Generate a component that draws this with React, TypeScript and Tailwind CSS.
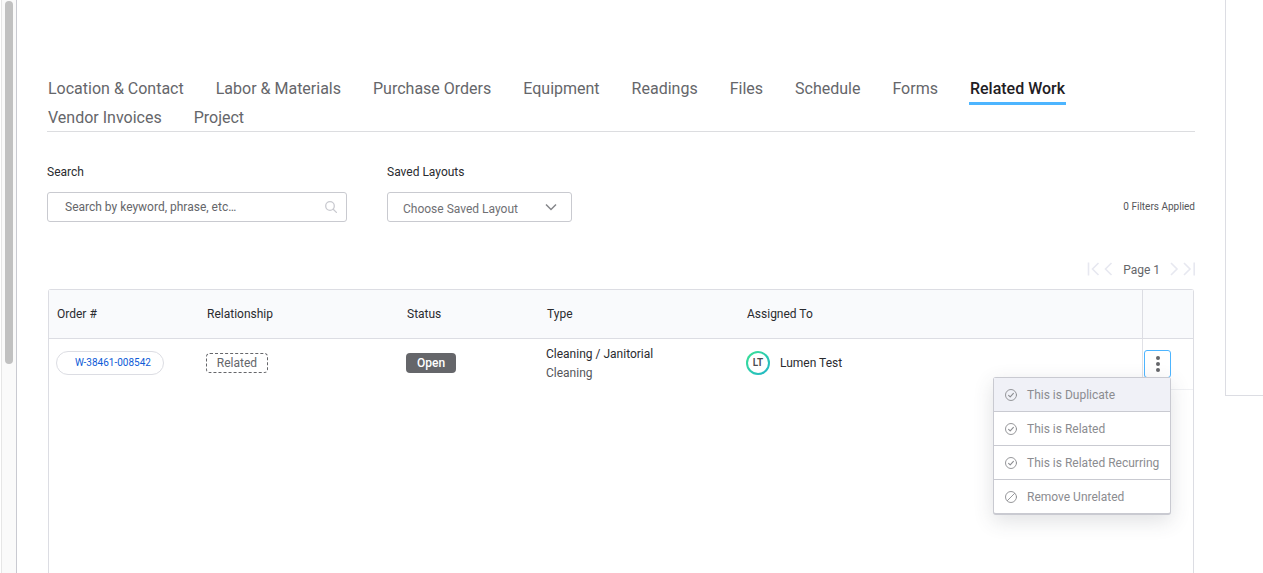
import { useState } from 'react';

const tabs = [
  'Location & Contact',
  'Labor & Materials',
  'Purchase Orders',
  'Equipment',
  'Readings',
  'Files',
  'Schedule',
  'Forms',
  'Related Work',
  'Vendor Invoices',
  'Project',
];

const actions = [
  { label: 'This is Duplicate', icon: 'check' },
  { label: 'This is Related', icon: 'check' },
  { label: 'This is Related Recurring', icon: 'check' },
  { label: 'Remove Unrelated', icon: 'ban' },
];

const ActionIcon = ({ icon }: { icon: string }) => (
  <svg className="h-3 w-3 shrink-0" viewBox="0 0 12 12" fill="none" stroke="currentColor" strokeLinecap="round" strokeLinejoin="round">
    <circle cx="6" cy="6" r="5.5" strokeWidth="0.9" />
    {icon === 'check' ? <path d="M3.6 6.3l1.6 1.5 3.2-3.5" strokeWidth="1.1" /> : <path d="M2.4 9.6l7.2-7.2" strokeWidth="0.9" />}
  </svg>
);

const Pager = () => (
  <nav aria-label="Pagination" className="mt-[39px] mb-[11px] flex h-[17px] items-start justify-end text-xs text-[#65666a]">
    <button aria-label="First page" className="text-[#e7e8f0]">
      <svg className="h-4 w-4" viewBox="0 0 16 16" fill="none" stroke="currentColor" strokeWidth="1.6">
        <path d="M2.5 1.5v13M12.5 2l-6 6 6 6" />
      </svg>
    </button>
    <button aria-label="Previous page" className="text-[#e7e8f0]">
      <svg className="h-4 w-3" viewBox="0 0 12 16" fill="none" stroke="currentColor" strokeWidth="1.6">
        <path d="M9.5 2l-6 6 6 6" />
      </svg>
    </button>
    <span className="self-end pr-[7px] pl-[9px] leading-4">Page 1</span>
    <button aria-label="Next page" className="text-[#e7e8f0]">
      <svg className="h-4 w-3" viewBox="0 0 12 16" fill="none" stroke="currentColor" strokeWidth="1.6">
        <path d="M4 2l6 6-6 6" />
      </svg>
    </button>
    <button aria-label="Last page" className="text-[#e7e8f0]">
      <svg className="h-4 w-4" viewBox="0 0 16 16" fill="none" stroke="currentColor" strokeWidth="1.6">
        <path d="M15.2 1.5v13M5 2l6 6-6 6" />
      </svg>
    </button>
  </nav>
);

const RowMenu = () => {
  const [open, setOpen] = useState(true);

  return (
    <div className="relative w-[27px]">
      <button
        aria-label="Row actions"
        aria-expanded={open}
        onClick={() => setOpen(!open)}
        className="flex h-7 w-[27px] items-center justify-center rounded-[3px] border border-[#4db5ff] bg-white pb-px text-[#65666a]"
      >
        <svg className="h-4 w-1" viewBox="0 0 4 16" fill="currentColor">
          <circle cx="2" cy="2" r="2" />
          <circle cx="2" cy="8" r="2" />
          <circle cx="2" cy="14" r="2" />
        </svg>
      </button>
      {open && (
        <ul
          role="menu"
          className="absolute top-[27px] right-0 z-10 w-[178px] rounded-[3px] border border-b-2 border-[#c9cad1] bg-white shadow-[0_6px_20px_rgba(60,70,80,0.16)]"
        >
          {actions.map((action, index) => (
            <li key={action.label} role="none" className={index > 0 ? 'border-t border-[#c9cad1]' : 'bg-[#f0f1f7]'}>
              <button
                role="menuitem"
                className="flex h-[33px] w-full items-center gap-[10px] pl-[11px] text-xs whitespace-nowrap text-[#8b8c90]"
              >
                <ActionIcon icon={action.icon} />
                {action.label}
              </button>
            </li>
          ))}
        </ul>
      )}
    </div>
  );
};

const OrdersTable = () => (
  <div className="mx-px flex-1 rounded-t-[3px] border border-b-0 border-[#dcdde3]">
    <table className="w-full table-fixed border-separate border-spacing-0 text-left text-xs text-[#2a2b2f]">
      <colgroup>
        <col className="w-[150px]" />
        <col className="w-[200px]" />
        <col className="w-[140px]" />
        <col className="w-[200px]" />
        <col />
        <col className="w-[51px]" />
      </colgroup>
      <thead>
        <tr className="h-[49px] bg-[#f9fafc]">
          {['Order #', 'Relationship', 'Status', 'Type', 'Assigned To'].map((name) => (
            <th key={name} className="border-b border-[#dcdde3] px-2 font-normal">
              {name}
            </th>
          ))}
          <th aria-label="Actions" className="border-b border-l border-[#dcdde3]" />
        </tr>
      </thead>
      <tbody>
        <tr className="h-[51px]">
          <td className="px-[7px] pb-[3px]">
            <a
              href="#order"
              className="flex h-6 w-[108px] items-center rounded-full border border-[#dcdde3] pl-[18px] text-[10px] text-[#0d5bd7]"
            >
              W-38461-008542
            </a>
          </td>
          <td className="px-[7px] pb-[3px]">
            <span className="flex h-5 w-[62px] items-center justify-center rounded-[4px] border border-dashed border-[#65666a] text-[#65666a]">
              Related
            </span>
          </td>
          <td className="px-[7px] pb-[3px]">
            <span className="flex h-5 w-[50px] items-center justify-center rounded-[4px] bg-[#65666a] font-medium text-white">Open</span>
          </td>
          <td className="px-[7px] pb-[2px] leading-[19px]">
            <p>Cleaning / Janitorial</p>
            <p className="text-[#55565a]">Cleaning</p>
          </td>
          <td className="px-[7px] pb-[3px]">
            <div className="flex items-center gap-[10px]">
              <span className="flex h-6 w-6 rounded-full bg-linear-to-br from-[#3de38f] to-[#22b3c9] p-[2px]">
                <span className="flex flex-1 items-center justify-center rounded-full bg-white text-[10px] font-semibold text-[#4b4c50]">LT</span>
              </span>
              Lumen Test
            </div>
          </td>
          <td className="border-b border-l border-b-[#f0f1f4] border-l-[#e0e1e6] px-px">
            <RowMenu />
          </td>
        </tr>
      </tbody>
    </table>
  </div>
);

const App = () => {
  return (
    <div className="flex min-h-screen bg-white font-['Roboto',sans-serif]">
      <div className="ml-px w-4 shrink-0 border-r border-l border-r-[#c9cad1] border-l-[#e6e6e6] bg-[#fafafa] pt-px pl-[3px]">
        <div className="h-[363px] w-2 rounded-full bg-[#c1c1c1]" />
      </div>

      <main className="flex min-w-0 flex-1 flex-col px-[30px] pt-[76px]">
        <nav className="flex flex-wrap items-start gap-x-[30px] border-b border-[#dcdde0] text-base leading-[26px] text-[#65666a]">
          {tabs.map((tab) => (
            <a
              key={tab}
              href="#tab"
              className={tab === 'Related Work' ? 'border-b-3 border-[#4db5ff] px-px font-medium text-[#1f2024]' : 'px-px'}
            >
              {tab}
            </a>
          ))}
        </nav>

        <div className="mt-8 flex items-end gap-10 text-xs text-[#2a2b2f]">
          <div className="w-[300px]">
            <label htmlFor="search" className="block leading-4">
              Search
            </label>
            <div className="mt-3 flex h-[30px] items-center rounded-[3px] border border-[#c9cad0] pr-[9px] pl-[17px]">
              <input
                id="search"
                type="text"
                placeholder="Search by keyword, phrase, etc…"
                className="min-w-0 flex-1 outline-none placeholder:text-[#65666a]"
              />
              <svg className="h-3 w-3 text-[#c9cad0]" viewBox="0 0 12 12" fill="none" stroke="currentColor" strokeWidth="1.3" strokeLinecap="round">
                <circle cx="5" cy="5" r="4.3" />
                <path d="M8.2 8.2l3.200 3.200" />
              </svg>
            </div>
          </div>
          <div className="w-[185px]">
            <label htmlFor="layout" className="block leading-4">
              Saved Layouts
            </label>
            <div className="mt-3 flex h-[30px] items-center rounded-[3px] border border-[#c9cad0] pr-[14px] pl-[15px] text-[#6f7074]">
              <select id="layout" className="h-full min-w-0 flex-1 appearance-none pt-1 outline-none">
                <option>Choose Saved Layout</option>
              </select>
              <svg className="h-3 w-3 text-[#85868a]" viewBox="0 0 12 12" fill="none" stroke="currentColor" strokeWidth="1.5">
                <path d="M1 3.500l5 5 5-5" />
              </svg>
            </div>
          </div>
          <p className="ml-auto text-[10px] leading-[30px] text-[#55565a]">0 Filters Applied</p>
        </div>

        <Pager />
        <OrdersTable />
      </main>

      <aside className="h-[396px] w-[38px] shrink-0 border-b border-l border-[#dcdde3]" />
    </div>
  );
};

export default App;
